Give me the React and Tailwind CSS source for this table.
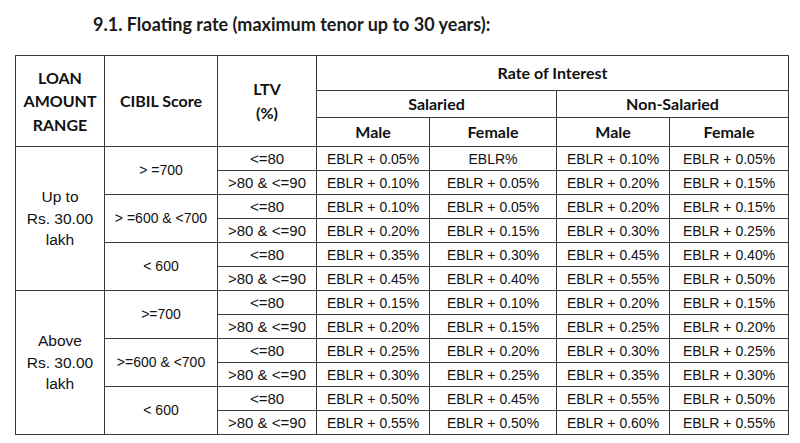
import React from 'react'

const groups = [
  {
    amount: ['Up to', 'Rs. 30.00', 'lakh'],
    cibil: [
      {
        score: '> =700',
        rows: [
          ['<=80', 'EBLR + 0.05%', 'EBLR%', 'EBLR + 0.10%', 'EBLR + 0.05%'],
          ['>80 & <=90', 'EBLR + 0.10%', 'EBLR + 0.05%', 'EBLR + 0.20%', 'EBLR + 0.15%'],
        ],
      },
      {
        score: '> =600 & <700',
        rows: [
          ['<=80', 'EBLR + 0.10%', 'EBLR + 0.05%', 'EBLR + 0.20%', 'EBLR + 0.15%'],
          ['>80 & <=90', 'EBLR + 0.20%', 'EBLR + 0.15%', 'EBLR + 0.30%', 'EBLR + 0.25%'],
        ],
      },
      {
        score: '< 600',
        rows: [
          ['<=80', 'EBLR + 0.35%', 'EBLR + 0.30%', 'EBLR + 0.45%', 'EBLR + 0.40%'],
          ['>80 & <=90', 'EBLR + 0.45%', 'EBLR + 0.40%', 'EBLR + 0.55%', 'EBLR + 0.50%'],
        ],
      },
    ],
  },
  {
    amount: ['Above', 'Rs. 30.00', 'lakh'],
    cibil: [
      {
        score: '>=700',
        rows: [
          ['<=80', 'EBLR + 0.15%', 'EBLR + 0.10%', 'EBLR + 0.20%', 'EBLR + 0.15%'],
          ['>80 & <=90', 'EBLR + 0.20%', 'EBLR + 0.15%', 'EBLR + 0.25%', 'EBLR + 0.20%'],
        ],
      },
      {
        score: '>=600 & <700',
        rows: [
          ['<=80', 'EBLR + 0.25%', 'EBLR + 0.20%', 'EBLR + 0.30%', 'EBLR + 0.25%'],
          ['>80 & <=90', 'EBLR + 0.30%', 'EBLR + 0.25%', 'EBLR + 0.35%', 'EBLR + 0.30%'],
        ],
      },
      {
        score: '< 600',
        rows: [
          ['<=80', 'EBLR + 0.50%', 'EBLR + 0.45%', 'EBLR + 0.55%', 'EBLR + 0.50%'],
          ['>80 & <=90', 'EBLR + 0.55%', 'EBLR + 0.50%', 'EBLR + 0.60%', 'EBLR + 0.55%'],
        ],
      },
    ],
  },
]

// shared cell styles
const cell = 'border border-[#3a3a3a] p-0 text-center align-middle'
const head = 'border border-[#3a3a3a] p-0 text-center align-middle font-bold text-[16px] font-["Lato",sans-serif]'

export default function App() {
  return (
    <div className="w-[800px] h-[443px] bg-white text-[#111] font-['Liberation_Sans',sans-serif] overflow-hidden">
      <h1 className="pl-[93px] pt-[12px] h-[55px] text-[18px] leading-[24px] font-bold font-['Lato',sans-serif] text-[#1a1a1a]">
        9.1. Floating rate (maximum tenor up to 30 years):
      </h1>

      <table className="ml-[15px] w-[773px] table-fixed border-collapse">
        <colgroup>
          <col className="w-[89px]" />
          <col className="w-[113px]" />
          <col className="w-[99px]" />
          <col className="w-[113px]" />
          <col className="w-[127px]" />
          <col className="w-[113px]" />
          <col className="w-[119px]" />
        </colgroup>
        <thead>
          <tr className="h-[35px]">
            <th rowSpan={3} className={head + ' leading-[23.5px]'}>
              LOAN<br />AMOUNT<br />RANGE
            </th>
            <th rowSpan={3} className={head}>CIBIL Score</th>
            <th rowSpan={3} className={head + ' leading-[24px]'}>
              LTV<br />(%)
            </th>
            <th colSpan={4} className={head}>Rate of Interest</th>
          </tr>
          <tr className="h-[27px]">
            <th colSpan={2} className={head}>Salaried</th>
            <th colSpan={2} className={head}>Non-Salaried</th>
          </tr>
          <tr className="h-[29px]">
            <th className={head}>Male</th>
            <th className={head}>Female</th>
            <th className={head}>Male</th>
            <th className={head}>Female</th>
          </tr>
        </thead>
        <tbody>
          {groups.map((g, gi) =>
            g.cibil.map((c, ci) =>
              c.rows.map((r, ri) => (
                <tr key={`${gi}-${ci}-${ri}`} className="h-[24px]">
                  {ci === 0 && ri === 0 && (
                    <td rowSpan={6} className={cell + ' text-[15.5px] leading-[21.5px]'}>
                      {g.amount.map((line, li) => (
                        <div key={li}>{line}</div>
                      ))}
                    </td>
                  )}
                  {ri === 0 && (
                    <td rowSpan={2} className={cell + ' text-[14px]'}>{c.score}</td>
                  )}
                  <td className={cell + ' text-[15px] leading-[22px]'}>{r[0]}</td>
                  {r.slice(1).map((v, vi) => (
                    <td key={vi} className={cell + ' text-[14px] leading-[22px]'}>{v}</td>
                  ))}
                </tr>
              ))
            )
          )}
        </tbody>
      </table>
    </div>
  )
}
